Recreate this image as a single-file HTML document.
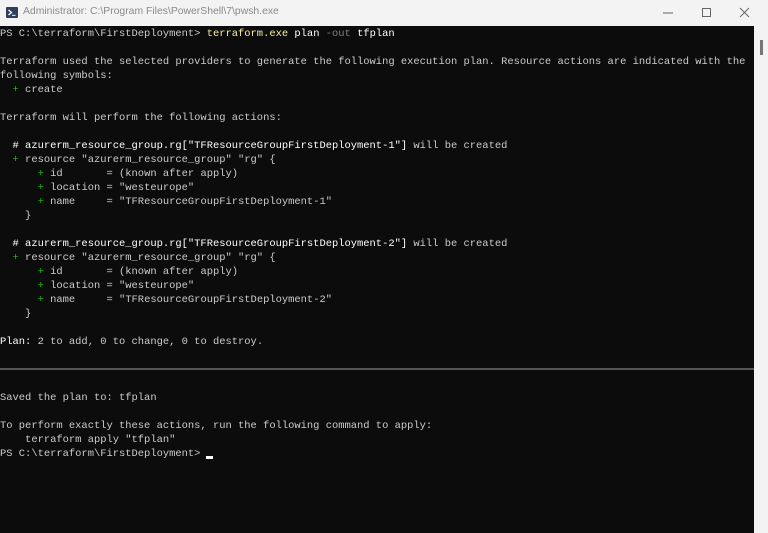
<!DOCTYPE html>
<html><head><style>
body{margin:0;width:768px;height:533px;overflow:hidden;background:#0c0c0c;font-family:"Liberation Sans",sans-serif}
#tb{position:absolute;left:0;top:0;width:768px;height:26px;background:#f3f3f3;}
#tb .t{position:absolute;left:23px;top:6px;font-size:10.4px;color:#8a8a8a}
#term{position:absolute;left:0;top:26px;width:754px;height:507px;background:#0c0c0c}
#sb{position:absolute;left:754px;top:26px;width:14px;height:507px;background:#f3f3f3}
#thumb{position:absolute;left:760px;top:40px;width:3px;height:15px;background:#777}
pre{position:absolute;left:0;top:27px;margin:0;font-family:"Liberation Mono",monospace;font-size:10.45px;line-height:14px;color:#cccccc}
.g{color:#16c60c}.y{color:#f9f1a5}.w{color:#fff}.d{color:#808080}
#sep{position:absolute;left:0;top:368px;width:754px;height:2px;background:#555}
#cur{position:absolute;left:206px;top:456px;width:7px;height:3px;background:#fff}
</style></head><body>
<div id="tb">
<svg style="position:absolute;left:6px;top:7px" width="12" height="11"><rect width="12" height="11" rx="1" fill="#2d3e5e"/><path d="M2.5 3 L5.5 5.5 L2.5 8" stroke="#fff" stroke-width="1.3" fill="none"/><path d="M6 8.3h3.5" stroke="#fff" stroke-width="1"/></svg>
<span class="t">Administrator: C:\Program Files\PowerShell\7\pwsh.exe</span>
<svg style="position:absolute;left:660px;top:6px" width="100" height="14"><path d="M3 7h10" stroke="#666"/><rect x="42.5" y="2.5" width="8" height="8" fill="none" stroke="#666"/><path d="M80 2l9 9M89 2l-9 9" stroke="#666"/></svg>
</div>
<div id="term"></div><div id="sb"></div><div id="thumb"></div>
<div id="sep"></div>
<pre>PS C:\terraform\FirstDeployment&gt; <span class="y">terraform.exe</span> <span class="w">plan</span> <span class="d">-out</span> <span class="w">tfplan</span>

Terraform used the selected providers to generate the following execution plan. Resource actions are indicated with the
following symbols:
  <span class="g">+</span> create

Terraform will perform the following actions:

<span class="w">  # azurerm_resource_group.rg["TFResourceGroupFirstDeployment-1"]</span> will be created
<span class="g">  +</span> resource "azurerm_resource_group" "rg" {
      <span class="g">+</span> id       = (known after apply)
      <span class="g">+</span> location = "westeurope"
      <span class="g">+</span> name     = "TFResourceGroupFirstDeployment-1"
    }

<span class="w">  # azurerm_resource_group.rg["TFResourceGroupFirstDeployment-2"]</span> will be created
<span class="g">  +</span> resource "azurerm_resource_group" "rg" {
      <span class="g">+</span> id       = (known after apply)
      <span class="g">+</span> location = "westeurope"
      <span class="g">+</span> name     = "TFResourceGroupFirstDeployment-2"
    }

<span class="w">Plan:</span> 2 to add, 0 to change, 0 to destroy.



Saved the plan to: tfplan

To perform exactly these actions, run the following command to apply:
    terraform apply "tfplan"
PS C:\terraform\FirstDeployment&gt; </pre>
<div id="cur"></div>
</body></html>
